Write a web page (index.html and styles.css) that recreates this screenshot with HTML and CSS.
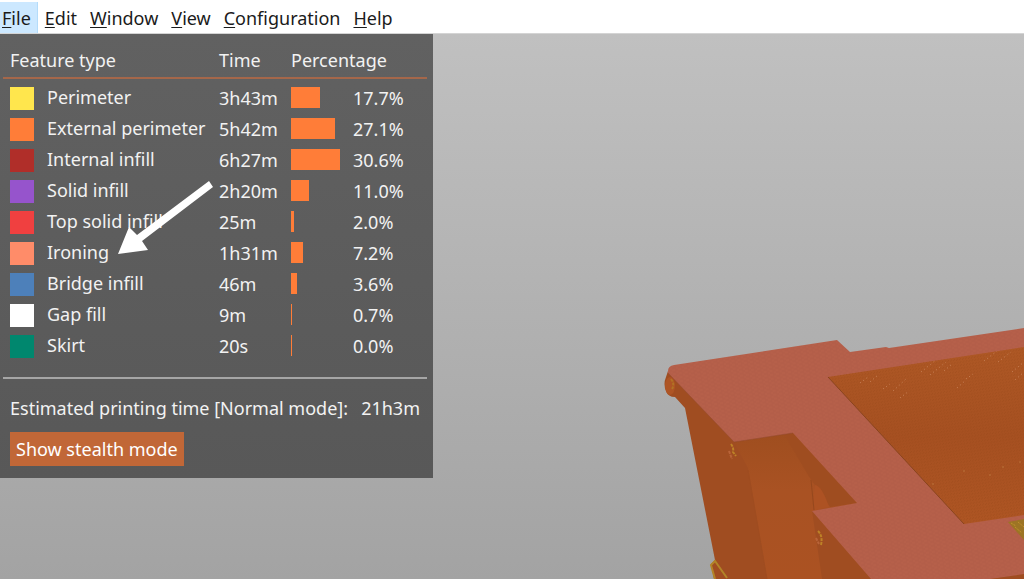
FILE: index.html
```
<!DOCTYPE html>
<html lang="en">
<head>
  <meta charset="UTF-8" />
  <meta name="viewport" content="width=device-width, initial-scale=1.0" />
  <title>Sliced preview</title>
  <link rel="stylesheet" href="styles.css">
</head>
<body>

  <!-- Menu bar -->
  <nav class="menu-bar">
    <button class="menu-item active"><u>F</u>ile</button>
    <button class="menu-item"><u>E</u>dit</button>
    <button class="menu-item"><u>W</u>indow</button>
    <button class="menu-item"><u>V</u>iew</button>
    <button class="menu-item"><u>C</u>onfiguration</button>
    <button class="menu-item"><u>H</u>elp</button>
  </nav>

  <main class="viewport">

    <!-- Legend -->
    <section class="legend">
      <table class="features">
        <colgroup>
          <col class="col-type"><col class="col-time"><col class="col-bar"><col>
        </colgroup>
        <thead>
          <tr><th>Feature type</th><th>Time</th><th colspan="2">Percentage</th></tr>
        </thead>
        <tbody>
          <tr><td><span class="swatch perimeter"></span>Perimeter</td><td>3h43m</td><td class="bar-cell"><div class="bar" style="width: 58%"></div></td><td>17.7%</td></tr>
          <tr><td><span class="swatch external"></span>External perimeter</td><td>5h42m</td><td class="bar-cell"><div class="bar" style="width: 88%"></div></td><td>27.1%</td></tr>
          <tr><td><span class="swatch internal"></span>Internal infill</td><td>6h27m</td><td class="bar-cell"><div class="bar" style="width: 98%"></div></td><td>30.6%</td></tr>
          <tr><td><span class="swatch solid"></span>Solid infill</td><td>2h20m</td><td class="bar-cell"><div class="bar" style="width: 36%"></div></td><td>11.0%</td></tr>
          <tr><td><span class="swatch top-solid"></span>Top solid infill</td><td>25m</td><td class="bar-cell"><div class="bar" style="width: 6%"></div></td><td>2.0%</td></tr>
          <tr><td><span class="swatch ironing"></span>Ironing</td><td>1h31m</td><td class="bar-cell"><div class="bar" style="width: 24%"></div></td><td>7.2%</td></tr>
          <tr><td><span class="swatch bridge"></span>Bridge infill</td><td>46m</td><td class="bar-cell"><div class="bar" style="width: 12%"></div></td><td>3.6%</td></tr>
          <tr><td><span class="swatch gap"></span>Gap fill</td><td>9m</td><td class="bar-cell"><div class="bar" style="width: 2%"></div></td><td>0.7%</td></tr>
          <tr><td><span class="swatch skirt"></span>Skirt</td><td>20s</td><td class="bar-cell"><div class="bar" style="width: 2%"></div></td><td>0.0%</td></tr>
        </tbody>
      </table>

      <div class="summary">
        <p class="estimate"><span>Estimated printing time [Normal mode]:</span><span>21h3m</span></p>
        <button class="stealth-btn">Show stealth mode</button>
      </div>

      <!-- Arrow pointing at Ironing -->
      <svg class="arrow" width="98" height="76" viewBox="0 0 98 76" aria-hidden="true">
        <path d="M1 74 12 47 20 55 92 1 96 7 25 61 31 70Z" fill="#fff"/>
      </svg>
    </section>

    <!-- Printed model -->
    <svg class="model" viewBox="433 34 591 545" preserveAspectRatio="xMaxYMax meet" aria-hidden="true">
      <defs>
        <pattern id="layers" width="6" height="4" patternUnits="userSpaceOnUse" patternTransform="rotate(-9)">
          <rect width="6" height="4" fill="#b6604a"/>
          <path d="M0 1h4M3 3h3" stroke="#b05c47" stroke-width="1"/>
        </pattern>
        <pattern id="weave" width="3" height="3" patternUnits="userSpaceOnUse" patternTransform="rotate(-9)">
          <path d="M0 2 2 0" stroke="#964718" stroke-width="1" opacity="0.4"/>
        </pattern>
        <linearGradient id="inner" x1="0" y1="0" x2="0" y2="1">
          <stop offset="0" stop-color="#ae5825"/>
          <stop offset="0.5" stop-color="#a65021"/>
          <stop offset="1" stop-color="#ae5523"/>
        </linearGradient>
        <linearGradient id="face" x1="0" y1="0" x2="0" y2="1">
          <stop offset="0" stop-color="#9f4e1f"/>
          <stop offset="0.4" stop-color="#a95223"/>
          <stop offset="1" stop-color="#ab5222"/>
        </linearGradient>
      </defs>

      <!-- body -->
      <path d="M668 371 666 377Q663 384 666 391 668 397 675 397L685 408 715 560 711 564 714 579H1024V480L793 425Z" fill="#a04d21"/>
      <path d="M734 442 793 432 857 503 812 511 822 579H767L748 468Z" fill="url(#face)"/>
      <path d="M784 434 793 432 857 503 830 507 808 475Z" fill="#9f4d20"/>
      <path d="M815 485Q822 486 829 507L812 511Z" fill="#ad5223"/>
      <path d="M811 480 814 510" stroke="#96481e" fill="none"/>
      <path d="M748 470 758 527 767 579" stroke="#9f4d21" fill="none"/>

      <!-- ironed top -->
      <path d="M668 371Q668 366 674 365L837 340 850 352 886 347 889 348 1024 328V579H871L812 511 857 503 793 433 734 442 668 373Z" fill="url(#layers)"/>
      <path d="M668 373 734 442 793 433" stroke="#91492d" fill="none" opacity="0.5"/>

      <!-- inside of the box -->
      <path d="M828 377 1024 347V515L964 524Z" fill="url(#inner)"/>
      <path d="M828 377 1024 347V515L964 524Z" fill="url(#weave)"/>
      <path d="M828 377 964 524" stroke="#8a451f" fill="none"/>
      <path d="M860 383l8-6M870 382l8-7M883 389l7-5M893 391l13-12M900 398l9-7M921 372l15-12M930 375l16-13M944 371l8-7M957 388l9-8M966 379l7-5M984 361l13-10M998 362l13-10M1012 372l12-10M1015 380l9-8" stroke="#ca855b" stroke-width="1" stroke-dasharray="1 3" fill="none"/>
      <path d="M963 471h2M989 475h2M1002 467h2M1019 462h2M932 484h2" stroke="#b9723a" fill="none"/>
      <path d="M1008 522 1024 519V540Z" fill="#9d7424"/>
      <path d="M1011 523l5 3M1015 527l7 6M1018 522l6 5" stroke="#c2912c" stroke-dasharray="2 1" fill="none"/>
      <path d="M990 579 1024 574V579Z" fill="#a04d21"/>

      <!-- seams -->
      <ellipse cx="670" cy="386" rx="5" ry="9" fill="#ae5525"/>
      <g fill="none" stroke-dasharray="3 1" stroke-width="2">
        <path d="M671 379q4 5 1 10" stroke="#b17224"/>
        <path d="M731 444q3 4 2 8l3 4" stroke="#bd8227"/>
        <path d="M729 451l3 8" stroke="#b96439"/>
        <path d="M818 531q5 5 3 14" stroke="#bd8227"/>
        <path d="M816 538l3 6" stroke="#b96439"/>
      </g>
      <path d="M715 579 711 565 715 561 727 578" stroke="#b28427" stroke-width="2" fill="none"/>
    </svg>

  </main>

</body>
</html>
```
FILE: styles.css
```
* {
  margin: 0;
  padding: 0;
  box-sizing: border-box;
}

body {
  min-height: 100vh;
  display: flex;
  flex-direction: column;
  font-family: 'Noto Sans', sans-serif;
  font-size: 18px;
  line-height: 24px;
}

button {
  font: inherit;
  border: none;
  cursor: pointer;
}

.menu-bar {
  display: flex;
  gap: 1px;
  height: 34px;
  padding-top: 2px;
  background: #fff;
  border-bottom: 1px solid #d4d4d4;
}

.menu-item {
  padding: 2px 6px;
  background: transparent;
  color: #1b1b1b;
}

.menu-item.active {
  padding-left: 2px;
  background: #cce8ff;
  border-right: 1px solid #b4dcfa;
}

.menu-item u {
  text-decoration-thickness: 1px;
  text-underline-offset: 2px;
}

.viewport {
  flex: 1;
  display: flex;
  align-items: flex-start;
  background: linear-gradient(#c0c0c0, #a3a3a3);
}

.legend {
  position: relative;
  flex: none;
  padding: 8px 6px 12px 3px;
  background: linear-gradient(#616161, #585858);
  color: #f2f2f2;
}

.features {
  width: 424px;
  table-layout: fixed;
  border-collapse: collapse;
}

.features th {
  height: 36px;
  font-weight: normal;
  text-align: left;
  border-bottom: 2px solid #a5674a;
}

.features td {
  height: 31px;
}

.features tr > :first-child {
  padding-left: 7px;
}

.features tbody::before {
  content: "";
  display: block;
  height: 3px;
}

.col-type {
  width: 216px;
}

.col-time {
  width: 72px;
}

.col-bar {
  width: 62px;
}

.swatch {
  display: inline-block;
  width: 24px;
  height: 23px;
  margin-right: 13px;
  vertical-align: middle;
}

.perimeter { background: #ffe64d; }
.external { background: #ff7d38; }
.internal { background: #b02e29; }
.solid { background: #9654cc; }
.top-solid { background: #f04040; }
.ironing { background: #ff8c69; }
.bridge { background: #4d80ba; }
.gap { background: #fff; }
.skirt { background: #00876e; }

.features .bar-cell {
  padding-right: 12px;
}

.bar {
  height: 21px;
  background: #ff7d38;
}

.summary {
  margin-top: 16px;
  padding: 17px 7px 0;
  border-top: 2px solid #a6a6a6;
}

.estimate {
  display: flex;
  justify-content: space-between;
  margin-bottom: 12px;
}

.stealth-btn {
  padding: 5px 6px;
  background: #c16737;
  color: #fff;
}

/* sits over the rows */
.arrow {
  position: absolute;
  left: 117px;
  top: 146px;
}

.model {
  flex: 1;
  min-width: 0;
  align-self: flex-end;
}
```
